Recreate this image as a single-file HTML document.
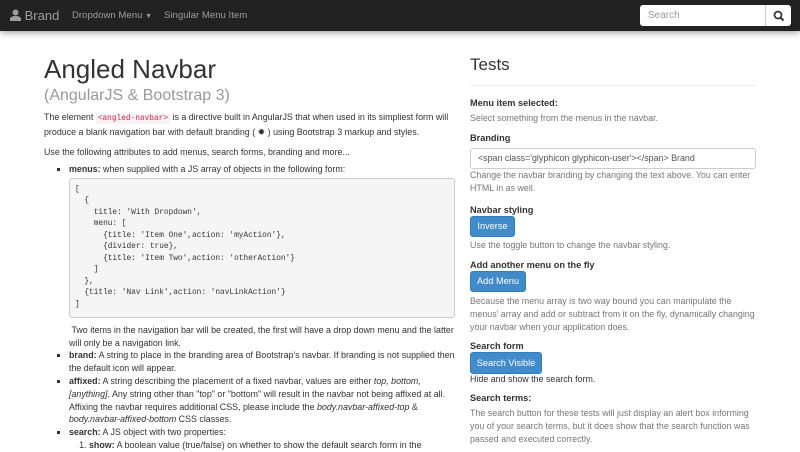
<!DOCTYPE html>
<html><head><meta charset="utf-8"><style>
*{box-sizing:border-box;margin:0;padding:0}
body{width:800px;height:450px;overflow:hidden;background:#fff;font-family:"Liberation Sans",sans-serif;font-size:8.9px;color:#333;position:relative}
.nav{position:absolute;left:0;top:0;width:800px;height:31px;background:#222;box-shadow:0 2px 6px rgba(0,0,0,.35)}
.nav span{position:absolute;color:#9d9d9d;font-size:9.6px;top:10px}
.abs{position:absolute}
p,li{line-height:12.8px}
.muted{color:#777}
.code{font-family:"Liberation Mono",monospace;font-size:7.8px;color:#333;white-space:pre;line-height:11.5px}
b{font-weight:bold}
.btn{position:absolute;left:470px;background:#428bca;border:1px solid #357ebd;border-radius:3px;color:#fff;font-size:9.2px;text-align:center;line-height:19px}
h4{font-size:9.2px;font-weight:bold;position:absolute;left:470px}
</style></head><body>
<div class="nav">
<span style="left:10px;top:8px;font-size:13px;color:#9d9d9d"><svg width="11" height="12" viewBox="0 0 11 12" style="vertical-align:-1px"><circle cx="5.5" cy="3.5" r="3" fill="#9d9d9d"/><path d="M0 12 L0 9.5 Q1 7 5.5 7 Q10 7 11 9.5 L11 12Z" fill="#9d9d9d"/></svg> Brand</span>
<span style="left:72px">Dropdown Menu <span style="position:static;font-size:7px">▼</span></span>
<span style="left:164px">Singular Menu Item</span>
<div class="abs" style="left:640px;top:5px;width:125px;height:21px;background:#fff;border-radius:3px 0 0 3px;color:#999;padding:5px 8px;font-size:10px">Search</div>
<div class="abs" style="left:765px;top:5px;width:26px;height:21px;background:#fff;border-left:1px solid #ccc;border-radius:0 3px 3px 0"><svg width="12" height="12" viewBox="0 0 12 12" style="position:absolute;left:7px;top:5px"><circle cx="5" cy="5" r="3.5" stroke="#333" stroke-width="1.7" fill="none"/><path d="M7.5 7.5L10.5 10.5" stroke="#333" stroke-width="2"/></svg></div>
</div>

<div class="abs" style="left:44px;top:54px;font-size:26px;color:#333">Angled Navbar</div>
<div class="abs" style="left:44px;top:87px;font-size:16px;color:#999">(AngularJS &amp; Bootstrap 3)</div>
<div class="abs" style="left:44px;top:111px;width:412px">
<p>The element <code style="font-family:'Liberation Mono',monospace;font-size:7.8px;color:#c7254e;background:#f9f2f4;padding:1px 2px">&lt;angled-navbar&gt;</code> is a directive built in AngularJS that when used in its simpliest form will produce a blank navigation bar with default branding ( <span style="font-size:9px">✹</span> ) using Bootstrap 3 markup and styles.</p>
<p style="margin-top:7px">Use the following attributes to add menus, search forms, branding and more...</p>
</div>
<ul class="abs" style="left:69px;top:163px;width:386px;list-style:square">
<li><b>menus:</b> when supplied with a JS array of objects in the following form:
<div class="code" style="margin:2px 0 6px;background:#f5f5f5;border:1px solid #ccc;border-radius:3px;padding:6px 5px;height:140px">[
  {
    title: 'With Dropdown',
    menu: [
      {title: 'Item One',action: 'myAction'},
      {divider: true},
      {title: 'Item Two',action: 'otherAction'}
    ]
  },
  {title: 'Nav Link',action: 'navLinkAction'}
]</div>
<p>&nbsp;Two items in the navigation bar will be created, the first will have a drop down menu and the latter will only be a navigation link.</p></li>
<li><b>brand:</b> A string to place in the branding area of Bootstrap's navbar. If branding is not supplied then the default icon will appear.</li>
<li><b>affixed:</b> A string describing the placement of a fixed navbar, values are either <i>top, bottom, [anything]</i>. Any string other than "top" or "bottom" will result in the navbar not being affixed at all. Affixing the navbar requires additional CSS, please include the <i>body.navbar-affixed-top</i> &amp; <i>body.navbar-affixed-bottom</i> CSS classes.</li>
<li><b>search:</b> A JS object with two properties:
<ol style="margin-left:20px"><li><b>show:</b> A boolean value (true/false) on whether to show the default search form in the</li></ol></li>
</ul>

<div class="abs" style="left:470px;top:55px;font-size:17px">Tests</div>
<div class="abs" style="left:470px;top:85px;width:286px;border-top:1px solid #eee"></div>
<h4 style="top:98px">Menu item selected:</h4>
<div class="abs muted" style="left:470px;top:113px">Select something from the menus in the navbar.</div>
<h4 style="top:133px">Branding</h4>
<div class="abs" style="left:470px;top:148px;width:286px;height:21px;border:1px solid #ccc;border-radius:3px;padding:4px 7px;color:#555">&lt;span class='glyphicon glyphicon-user'&gt;&lt;/span&gt; Brand</div>
<div class="abs muted" style="left:470px;top:169px;width:290px;line-height:13px">Change the navbar branding by changing the text above. You can enter HTML in as well.</div>
<h4 style="top:205px">Navbar styling</h4>
<div class="btn" style="top:216px;width:45px;height:21px">Inverse</div>
<div class="abs muted" style="left:470px;top:240px">Use the toggle button to change the navbar styling.</div>
<h4 style="top:260px">Add another menu on the fly</h4>
<div class="btn" style="top:271px;width:56px;height:21px">Add Menu</div>
<div class="abs muted" style="left:470px;top:295px;width:290px;line-height:13px">Because the menu array is two way bound you can manipulate the menus' array and add or subtract from it on the fly, dynamically changing your navbar when your application does.</div>
<h4 style="top:341px">Search form</h4>
<div class="btn" style="top:352px;width:72px;height:22px;line-height:20px">Search Visible</div>
<div class="abs" style="left:470px;top:374px">Hide and show the search form.</div>
<h4 style="top:393px">Search terms:</h4>
<div class="abs muted" style="left:470px;top:407px;width:290px;line-height:13px">The search button for these tests will just display an alert box informing you of your search terms, but it does show that the search function was passed and executed correctly.</div>
</body></html>
